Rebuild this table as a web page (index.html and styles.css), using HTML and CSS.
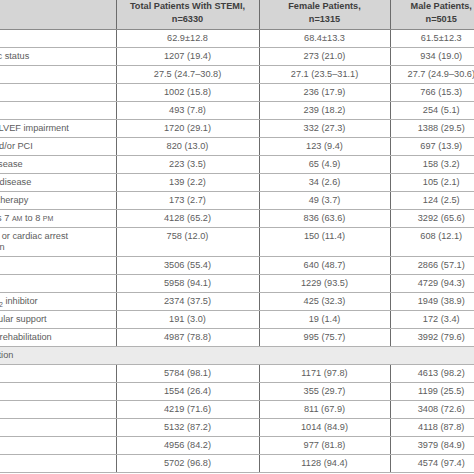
FILE: index.html
```html
<!DOCTYPE html>
<html>
<head>
<meta charset="utf-8">
<link rel="stylesheet" href="styles.css">
</head>
<body>
<table class="tbl">
  <colgroup>
    <col class="c-label">
    <col class="c-total">
    <col class="c-female">
    <col class="c-male">
  </colgroup>
  <thead>
    <tr>
      <th class="lab"></th>
      <th>Total Patients With STEMI,<br>n=6330</th>
      <th>Female Patients,<br>n=1315</th>
      <th>Male Patients,<br>n=5015</th>
    </tr>
  </thead>
  <tbody>
    <tr><td class="lab">Age, y</td><td>62.9±12.8</td><td>68.4±13.3</td><td>61.5±12.3</td></tr>
    <tr><td class="lab">Low socioeconomic status</td><td>1207 (19.4)</td><td>273 (21.0)</td><td>934 (19.0)</td></tr>
    <tr><td class="lab">BMI, kg/m²</td><td>27.5 (24.7–30.8)</td><td>27.1 (23.5–31.1)</td><td>27.7 (24.9–30.6)</td></tr>
    <tr><td class="lab">Diabetes mellitus</td><td>1002 (15.8)</td><td>236 (17.9)</td><td>766 (15.3)</td></tr>
    <tr><td class="lab">Prior stroke</td><td>493 (7.8)</td><td>239 (18.2)</td><td>254 (5.1)</td></tr>
    <tr><td class="lab">Moderate / severe LVEF impairment</td><td>1720 (29.1)</td><td>332 (27.3)</td><td>1388 (29.5)</td></tr>
    <tr><td class="lab">Previous CABG and/or PCI</td><td>820 (13.0)</td><td>123 (9.4)</td><td>697 (13.9)</td></tr>
    <tr><td class="lab">End-Stage renal disease</td><td>223 (3.5)</td><td>65 (4.9)</td><td>158 (3.2)</td></tr>
    <tr><td class="lab">Peripheral Arterial&#8194;disease</td><td>139 (2.2)</td><td>34 (2.6)</td><td>105 (2.1)</td></tr>
    <tr><td class="lab">Any anticoagulant therapy</td><td>173 (2.7)</td><td>49 (3.7)</td><td>124 (2.5)</td></tr>
    <tr><td class="lab">Arrival during hours 7 <span class="sc">AM</span> to 8 <span class="sc">PM</span></td><td>4128 (65.2)</td><td>836 (63.6)</td><td>3292 (65.6)</td></tr>
    <tr><td class="lab">Cardiogenic Shock or cardiac arrest<br>at current admission</td><td>758 (12.0)</td><td>150 (11.4)</td><td>608 (12.1)</td></tr>
    <tr><td class="lab">Anterior MI</td><td>3506 (55.4)</td><td>640 (48.7)</td><td>2866 (57.1)</td></tr>
    <tr><td class="lab">Primary PCI</td><td>5958 (94.1)</td><td>1229 (93.5)</td><td>4729 (94.3)</td></tr>
    <tr><td class="lab">Pretreatment P2Y<sub>12</sub> inhibitor</td><td>2374 (37.5)</td><td>425 (32.3)</td><td>1949 (38.9)</td></tr>
    <tr><td class="lab">Mechanical ventricular support</td><td>191 (3.0)</td><td>19 (1.4)</td><td>172 (3.4)</td></tr>
    <tr><td class="lab">Referral to cardiac rehabilitation</td><td>4987 (78.8)</td><td>995 (75.7)</td><td>3992 (79.6)</td></tr>
    <tr class="section"><td colspan="4">Discharge medication</td></tr>
    <tr><td class="lab">Aspirin</td><td>5784 (98.1)</td><td>1171 (97.8)</td><td>4613 (98.2)</td></tr>
    <tr><td class="lab">Clopidogrel</td><td>1554 (26.4)</td><td>355 (29.7)</td><td>1199 (25.5)</td></tr>
    <tr><td class="lab">Ticagrelor</td><td>4219 (71.6)</td><td>811 (67.9)</td><td>3408 (72.6)</td></tr>
    <tr><td class="lab">β-blocker</td><td>5132 (87.2)</td><td>1014 (84.9)</td><td>4118 (87.8)</td></tr>
    <tr><td class="lab">ACE inhibitor/ARB</td><td>4956 (84.2)</td><td>977 (81.8)</td><td>3979 (84.9)</td></tr>
    <tr><td class="lab">Statin</td><td>5702 (96.8)</td><td>1128 (94.4)</td><td>4574 (97.4)</td></tr>
  </tbody>
</table>
</body>
</html>
```

FILE: styles.css
```css
html, body {
  margin: 0;
  padding: 0;
  overflow: hidden;
  background: #ffffff;
}

.tbl {
  border-collapse: collapse;
  table-layout: fixed;
  width: 576px;
  margin-left: -84px;
  font-family: "Liberation Sans", Arial, sans-serif;
  font-size: 9.2px;
  color: #5c5c5c;
}

.c-label { width: 200px; }
.c-total { width: 143px; }
.c-female { width: 131px; }
.c-male { width: 102px; }

.tbl th {
  background: #d5d5d5;
  color: #3e3e3e;
  font-weight: bold;
  line-height: 12.5px;
  padding: 0 2px 4px;
  text-align: center;
  vertical-align: top;
  white-space: nowrap;
  border-left: 1px solid #6c6c6c;
  border-bottom: 1px solid #8a8a8a;
}

.tbl td {
  line-height: 11px;
  padding: 3px 4px;
  text-align: center;
  vertical-align: top;
  white-space: nowrap;
  border-left: 1px solid #6c6c6c;
  border-bottom: 1px solid #b2b2b2;
}

.tbl .lab {
  text-align: left;
  padding-left: 6px;
  border-left: none;
  overflow: hidden;
}

.sc {
  font-size: 7px;
}

.tbl sub {
  font-size: 7px;
  line-height: 0;
}

.section td {
  background: #ebebeb;
  text-align: left;
  padding-left: 9px;
  border-left: none;
}
```
